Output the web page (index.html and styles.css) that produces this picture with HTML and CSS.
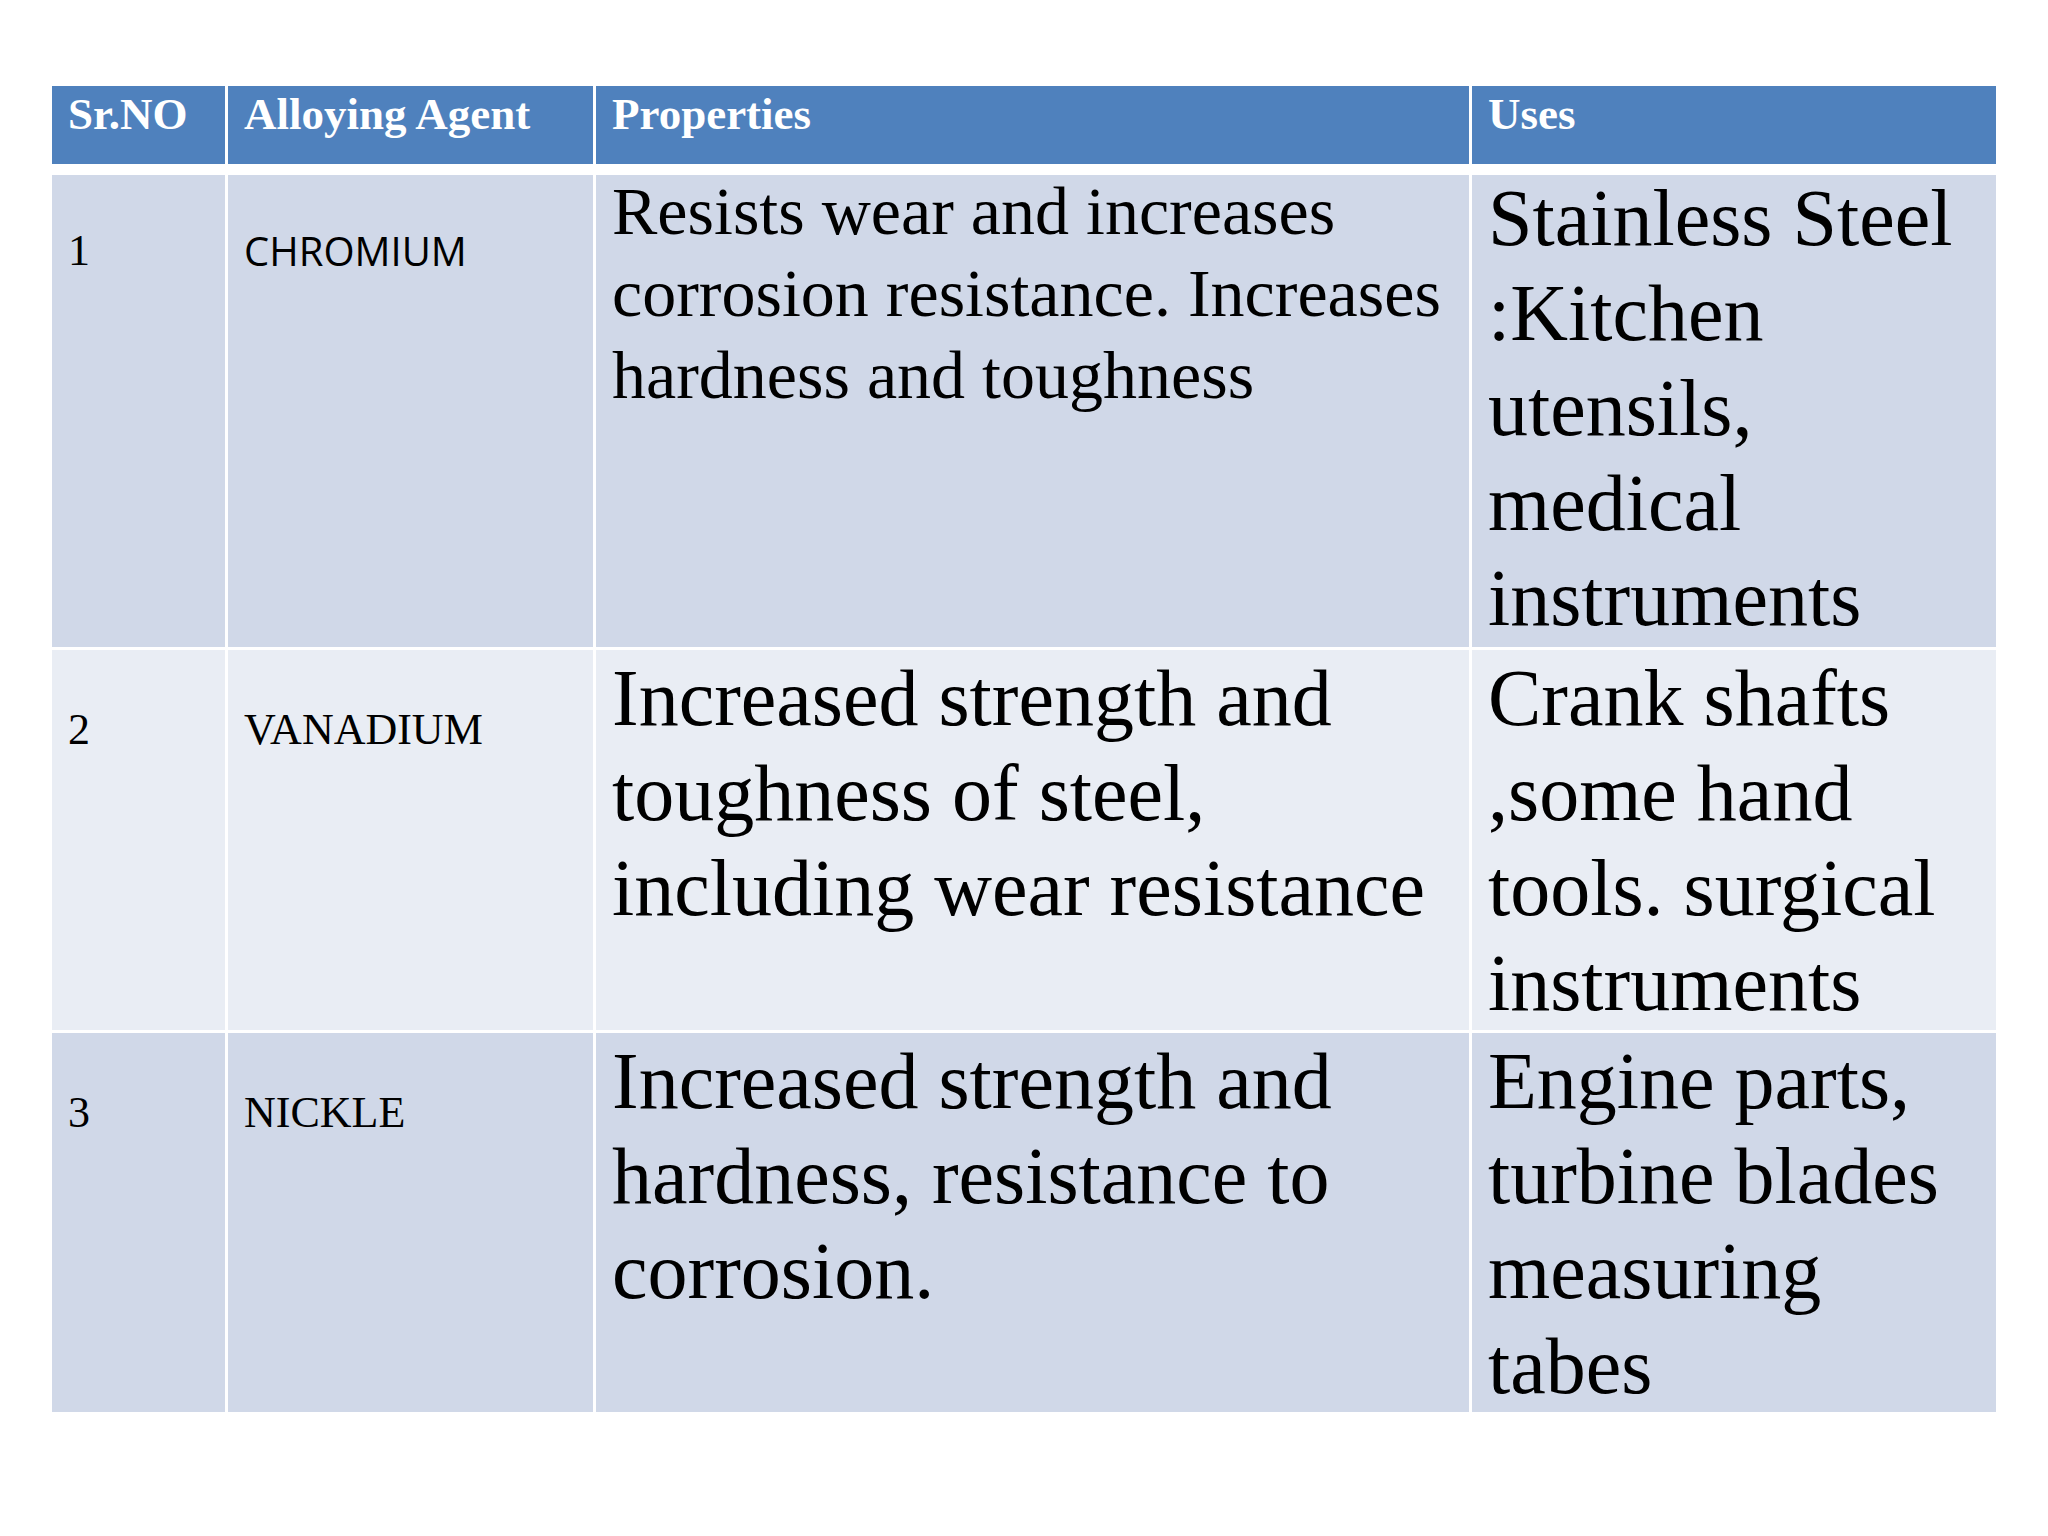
FILE: index.html
```html
<!DOCTYPE html>
<html lang="en">
<head>
<meta charset="utf-8">
<title>Alloying Agents</title>
<link rel="stylesheet" href="styles.css">
</head>
<body>
<div class="slide">
  <div class="table">
    <div class="cell head">Sr.NO</div>
    <div class="cell head">Alloying Agent</div>
    <div class="cell head">Properties</div>
    <div class="cell head">Uses</div>

    <div class="cell odd small first">1</div>
    <div class="cell odd small sans first">CHROMIUM</div>
    <div class="cell odd medium first"><p class="txt">Resists wear and increases corrosion resistance. Increases hardness and toughness</p></div>
    <div class="cell odd large first"><p class="txt">Stainless Steel :Kitchen utensils, medical instruments</p></div>

    <div class="cell even small">2</div>
    <div class="cell even small">VANADIUM</div>
    <div class="cell even large"><p class="txt">Increased strength and toughness of steel, including wear resistance</p></div>
    <div class="cell even large"><p class="txt">Crank shafts ,some hand tools. surgical instruments</p></div>

    <div class="cell odd small">3</div>
    <div class="cell odd small">NICKLE</div>
    <div class="cell odd large"><p class="txt">Increased strength and hardness, resistance to corrosion.</p></div>
    <div class="cell odd large"><p class="txt">Engine parts, turbine blades measuring tabes</p></div>
  </div>
</div>
</body>
</html>
```
FILE: styles.css
```css
html, body {
  margin: 0;
  padding: 0;
  background: #ffffff;
}

.slide {
  width: 2048px;
  height: 1536px;
  padding: 86px 52px 0 52px;
  box-sizing: border-box;
  font-family: "Liberation Serif", "Times New Roman", serif;
  color: #000000;
}

.table {
  display: grid;
  grid-template-columns: 173px 365px 873px 524px;
  grid-template-rows: 86px 472px 380px 379px;
  gap: 3px;
  width: 1944px;
}

.cell {
  padding: 0 8px 0 16px;
  min-width: 0;
}

.txt {
  margin: 0;
}

.head {
  background: #4f81bd;
  color: #ffffff;
  font-weight: bold;
  font-size: 45px;
  line-height: 1.15;
  padding-top: 3px;
  margin-bottom: 8px;
}

.odd {
  background: #d0d8e8;
}

.even {
  background: #e9edf4;
}

.small {
  font-size: 44px;
  line-height: 50px;
  padding-top: 55px;
}

.small.first {
  padding-top: 51px;
}

.sans {
  font-family: "Open Sans", "Liberation Sans", sans-serif;
  font-size: 40px;
}

.medium {
  font-size: 68px;
  line-height: 82px;
}

.medium.first .txt {
  margin-top: -5px;
}

.large {
  font-size: 80px;
  line-height: 95px;
  padding-top: 1px;
}

.large.first .txt {
  margin-top: -5px;
}
```
